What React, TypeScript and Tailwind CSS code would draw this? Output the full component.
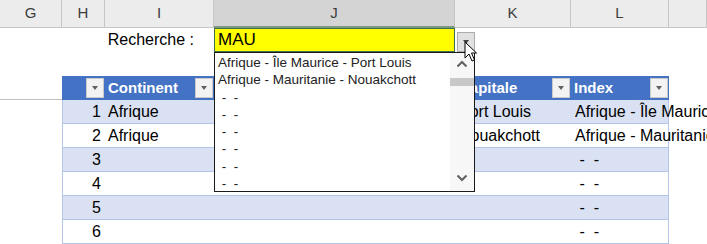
import React from 'react';

type Row = { n: string; cont?: string; cap?: string; idx: string };

const rows: Row[] = [
  { n: '1', cont: 'Afrique', cap: 'Port Louis', idx: 'Afrique - Île Maurice - Port Louis' },
  { n: '2', cont: 'Afrique', cap: 'Nouakchott', idx: 'Afrique - Mauritanie - Nouakchott' },
  { n: '3', idx: ' -  - ' },
  { n: '4', idx: ' -  - ' },
  { n: '5', idx: ' -  - ' },
  { n: '6', idx: ' -  - ' },
];

const listItems = [
  'Afrique - Île Maurice - Port Louis',
  'Afrique - Mauritanie - Nouakchott',
  ' -  - ',
  ' -  - ',
  ' -  - ',
  ' -  - ',
  ' -  - ',
  ' -  - ',
];

const FilterBtn = () => (
  <span className="ml-auto mr-[1px] flex h-[20px] w-[18px] shrink-0 items-center justify-center border border-[#c9c9c9] bg-[#f3f3f3]">
    <span className="h-0 w-0 border-x-[3.5px] border-t-[4px] border-x-transparent border-t-[#606060]" />
  </span>
);

const ColHead = ({ label, selected }: { label: string; selected?: boolean }) => (
  <div
    className={
      selected
        ? 'flex items-center justify-center border-r border-b-2 border-r-[#c6c6c6] border-b-[#7a9a84] bg-[#d4d4d4] text-[15px] text-[#3d3d3d]'
        : 'flex items-center justify-center border-r border-b border-[#c6c6c6] bg-[#ececec] text-[15px] text-[#3d3d3d]'
    }
  >
    {label}
  </div>
);

export default function App() {
  return (
    <div className="relative h-[244px] w-[707px] overflow-hidden bg-white font-['Liberation_Sans',Arial,sans-serif] text-black">
      <div className="grid grid-cols-[62px_43px_109px_241px_116px_98px_1fr] grid-rows-[28px_repeat(9,24px)]">
        {/* column letters */}
        <ColHead label="G" />
        <ColHead label="H" />
        <ColHead label="I" />
        <ColHead label="J" selected />
        <ColHead label="K" />
        <ColHead label="L" />
        <ColHead label="" />

        {/* search row */}
        <div />
        <div />
        <div className="flex items-center justify-end pr-[20px] text-[16px]">Recherche :</div>
        <div className="flex items-center border border-[#3f6e4e] bg-[#ffff00] pl-[3px] text-[17px]">MAU</div>
        <div />
        <div />
        <div />

        {/* empty row */}
        <div className="col-span-7" />

        {/* table header */}
        <div className="border-b border-[#bfbfbf]" />
        <div className="flex items-center bg-[#4472c4]">
          <FilterBtn />
        </div>
        <div className="flex items-center bg-[#4472c4] pl-[3px] text-[15px] font-bold text-white">
          Continent
          <FilterBtn />
        </div>
        <div className="flex items-center bg-[#4472c4]">
          <FilterBtn />
        </div>
        <div className="flex items-center bg-[#4472c4] pl-[4px] text-[15px] font-bold text-white">
          Capitale
          <FilterBtn />
        </div>
        <div className="flex items-center bg-[#4472c4] pl-[3px] text-[15px] font-bold text-white">
          Index
          <FilterBtn />
        </div>
        <div />

        {rows.map((r, i) => {
          const bg = i % 2 === 0 ? 'bg-[#d9e1f2]' : 'bg-white';
          const cell = `flex items-center border-b border-[#b4c6e7] text-[16px] whitespace-pre ${bg}`;
          return (
            <React.Fragment key={r.n}>
              <div />
              <div className={`${cell} justify-end border-l pr-[4px]`}>{r.n}</div>
              <div className={`${cell} pl-[3px]`}>{r.cont}</div>
              <div className={cell} />
              <div className={`${cell} pl-[4px]`}>{r.cap}</div>
              <div className={`${cell} border-r pl-[4px]`}>{r.idx}</div>
              <div />
            </React.Fragment>
          );
        })}
      </div>

      {/* combo drop button */}
      <div className="absolute left-[457px] top-[32px] z-10 flex h-[20px] w-[18px] items-center justify-center border border-[#ababab] bg-[#e1e1e1]">
        <span className="h-0 w-0 border-x-[3.5px] border-t-[4px] border-x-transparent border-t-[#404040]" />
      </div>

      {/* dropdown list */}
      <div className="absolute left-[214px] top-[52px] z-10 flex h-[140px] w-[261px] border border-[#1a1a1a] bg-white">
        <div className="flex-1 pt-[1px]">
          {listItems.map((t, i) => (
            <div key={i} className="h-[17.3px] whitespace-pre pl-[3px] text-[13.5px] leading-[17.3px] text-[#222]">
              {t}
            </div>
          ))}
        </div>
        <div className="flex w-[24px] flex-col items-center bg-[#f7f7f7]">
          <svg width="12" height="8" viewBox="0 0 12 8" className="mt-[7px]">
            <path d="M1.5 6.5 L6 2 L10.5 6.5" fill="none" stroke="#606060" strokeWidth="2" />
          </svg>
          <div className="mt-[10px] h-[8px] w-full bg-[#c8c8c8]" />
          <div className="flex-1" />
          <svg width="12" height="8" viewBox="0 0 12 8" className="mb-[9px]">
            <path d="M1.5 1.5 L6 6 L10.5 1.5" fill="none" stroke="#606060" strokeWidth="2" />
          </svg>
        </div>
      </div>

      {/* mouse pointer */}
      <svg width="14" height="22" viewBox="0 0 14 22" className="absolute left-[464px] top-[41px] z-20">
        <path d="M1 1 L1 17 L5 13 L8 20 L10.5 19 L7.5 12 L12.5 12 Z" fill="white" stroke="black" strokeWidth="1" strokeLinejoin="round" />
      </svg>
    </div>
  );
}
